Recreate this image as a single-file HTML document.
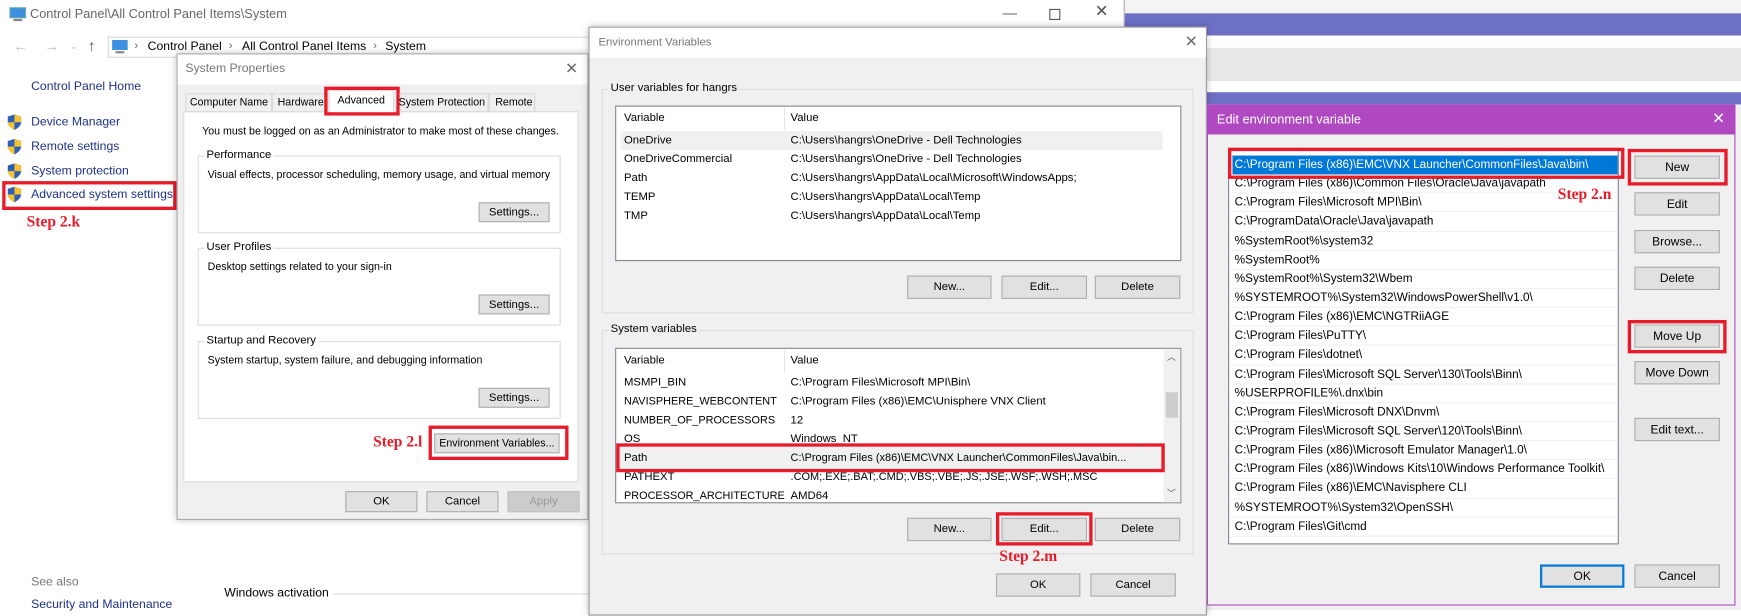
<!DOCTYPE html>
<html><head><meta charset="utf-8"><style>
*{margin:0;padding:0;box-sizing:border-box}
html,body{width:1741px;height:610px;overflow:hidden;background:#fff}
.s{position:absolute;left:0;top:0;width:1568px;height:549px;transform:scale(1.11033,1.11111);transform-origin:0 0;font-family:"Liberation Sans",sans-serif;font-size:10.2px;color:#000}
.a{position:absolute}
.t{position:absolute;line-height:14px;white-space:nowrap}
.b{position:absolute;background:#e1e1e1;border:1px solid #adadad;text-align:center;font-size:10.2px;display:flex;align-items:center;justify-content:center;white-space:nowrap}
.r{position:absolute;border:3px solid #e81b2a}
.st{position:absolute;font-family:"Liberation Serif",serif;font-weight:bold;color:#e81b2a;font-size:14px;line-height:16px;white-space:nowrap}
.g{position:absolute;border:1px solid #dcdcdc}
.gl{position:absolute;background:#f0f0f0;padding:0 2px;line-height:14px;white-space:nowrap}
.gw{background:#fff}
.el div{padding-left:4px;border-bottom:1px solid #f0f0f0;height:17.15px}
</style></head><body><div class="s">
<div class="a" style="left:1012px;top:0;width:556px;height:12px;background:#f4f4f4"></div>
<div class="a" style="left:1012px;top:12px;width:556px;height:20px;background:#6e70c6"></div>
<div class="a" style="left:1012px;top:32px;width:556px;height:11px;background:#fff"></div>
<div class="a" style="left:1012px;top:43px;width:556px;height:30px;background:#e8e8e8"></div>
<div class="a" style="left:1012px;top:83px;width:556px;height:11px;background:#6e70c6"></div>
<div class="a" style="left:1012px;top:94px;width:556px;height:455px;background:#f0f0f0"></div>

<div class="a" style="left:0;top:0;width:1013px;height:549px;background:#fff;border-right:1px solid #aaa"></div>
<svg class="a" style="left:8px;top:6px" width="16" height="14"><rect x="1" y="1" width="14" height="9" fill="#3d8fe0" stroke="#6aa" /><rect x="4" y="11" width="8" height="2" fill="#888"/></svg>
<div class="t" style="left:27px;top:6px;color:#666;font-size:11.5px">Control Panel\All Control Panel Items\System</div>
<div class="t" style="left:903px;top:5px;color:#666;font-size:13px">—</div>
<div class="a" style="left:945px;top:8px;width:10px;height:10px;border:1px solid #555"></div>
<div class="t" style="left:986px;top:4px;color:#555;font-size:15px">✕</div>
<div class="t" style="left:12px;top:35px;color:#bbb;font-size:13px">←</div>
<div class="t" style="left:40px;top:35px;color:#bbb;font-size:13px">→</div>
<div class="t" style="left:63px;top:35px;color:#bbb;font-size:8px">⌄</div>
<div class="t" style="left:79px;top:34px;color:#555;font-size:14px">↑</div>
<div class="a" style="left:97px;top:33px;width:916px;height:19px;border:1px solid #d9d9d9;border-right:none"></div>
<svg class="a" style="left:100px;top:35px" width="16" height="14"><rect x="1" y="1" width="14" height="9" fill="#3d8fe0"/><rect x="4" y="11" width="8" height="2" fill="#888"/></svg>
<div class="t" style="left:121px;top:35px;color:#666">›</div>
<div class="t" style="left:133px;top:35px;font-size:11px">Control Panel</div>
<div class="t" style="left:206px;top:35px;color:#666">›</div>
<div class="t" style="left:218px;top:35px;font-size:11px">All Control Panel Items</div>
<div class="t" style="left:336px;top:35px;color:#666">›</div>
<div class="t" style="left:347px;top:35px;font-size:11px">System</div>
<div class="t" style="left:28px;top:71px;font-size:11px;color:#1e3287">Control Panel Home</div>
<svg width="0" height="0" style="position:absolute"><defs><g id="sh"><path d="M7 0L13 2V7C13 10 10 12.5 7 14C4 12.5 1 10 1 7V2Z" fill="#2c5fb5"/><path d="M7 0V7H13V2Z" fill="#f5c330"/><path d="M7 7H1C1 10 4 12.5 7 14Z" fill="#f5c330"/></g></defs></svg>
<svg class="a" style="left:6px;top:103px" width="14" height="14"><use href="#sh"/></svg>
<svg class="a" style="left:6px;top:125px" width="14" height="14"><use href="#sh"/></svg>
<svg class="a" style="left:6px;top:147px" width="14" height="14"><use href="#sh"/></svg>
<svg class="a" style="left:6px;top:168px" width="14" height="14"><use href="#sh"/></svg>
<div class="t" style="left:28px;top:103px;font-size:11px;color:#1e3287">Device Manager</div>
<div class="t" style="left:28px;top:125px;font-size:11px;color:#1e3287">Remote settings</div>
<div class="t" style="left:28px;top:147px;font-size:11px;color:#1e3287">System protection</div>
<div class="t" style="left:28px;top:168px;font-size:11px;color:#1e3287">Advanced system settings</div>
<div class="r" style="left:2px;top:163px;width:157px;height:26px"></div>
<div class="st" style="left:24px;top:193px">Step 2.k</div>
<div class="t" style="left:28px;top:517px;font-size:11px;color:#777">See also</div>
<div class="t" style="left:28px;top:537px;font-size:11px;color:#1e3287">Security and Maintenance</div>
<div class="t" style="left:202px;top:527px;font-size:11px">Windows activation</div>
<div class="a" style="left:300px;top:534px;width:712px;height:1px;background:#ddd"></div>

<!-- System Properties -->
<div class="a" style="left:159px;top:48px;width:371px;height:420px;background:#f0f0f0;border:1px solid #aaa;box-shadow:0 0 6px rgba(0,0,0,.25)"></div>
<div class="a" style="left:160px;top:49px;width:369px;height:27px;background:#fff"></div>
<div class="t" style="left:167px;top:55px;color:#777;font-size:11px">System Properties</div>
<div class="t" style="left:509px;top:54px;color:#666;font-size:14px">✕</div>
<div class="a" style="left:165px;top:100px;width:356px;height:334px;background:#fff;border:1px solid #d9d9d9"></div>
<div class="a" style="left:167px;top:84px;width:78px;height:17px;border:1px solid #d9d9d9;background:#f0f0f0"></div>
<div class="t" style="left:171px;top:86px;font-size:9.6px">Computer Name</div>
<div class="a" style="left:245px;top:84px;width:50px;height:17px;border:1px solid #d9d9d9;background:#f0f0f0"></div>
<div class="t" style="left:250px;top:86px;font-size:9.6px">Hardware</div>
<div class="a" style="left:296px;top:81px;width:59px;height:21px;border:1px solid #d9d9d9;border-bottom:none;background:#fff"></div>
<div class="t" style="left:304px;top:84px;font-size:9.6px">Advanced</div>
<div class="r" style="left:292px;top:78px;width:68px;height:26px"></div>
<div class="a" style="left:360px;top:84px;width:80px;height:17px;border:1px solid #d9d9d9;background:#f0f0f0"></div>
<div class="t" style="left:359px;top:86px;font-size:9.6px">System Protection</div>
<div class="a" style="left:440px;top:84px;width:42px;height:17px;border:1px solid #d9d9d9;background:#f0f0f0"></div>
<div class="t" style="left:446px;top:86px;font-size:9.6px">Remote</div>
<div class="t" style="left:182px;top:112px;font-size:9.6px">You must be logged on as an Administrator to make most of these changes.</div>
<div class="g" style="left:178px;top:140px;width:327px;height:70px"></div>
<div class="gl gw" style="left:184px;top:133px">Performance</div>
<div class="t" style="left:187px;top:151px;font-size:9.6px">Visual effects, processor scheduling, memory usage, and virtual memory</div>
<div class="b" style="left:431px;top:182px;width:64px;height:18px">Settings...</div>
<div class="g" style="left:178px;top:223px;width:327px;height:70px"></div>
<div class="gl gw" style="left:184px;top:216px">User Profiles</div>
<div class="t" style="left:187px;top:234px;font-size:9.6px">Desktop settings related to your sign-in</div>
<div class="b" style="left:431px;top:265px;width:64px;height:18px">Settings...</div>
<div class="g" style="left:178px;top:307px;width:327px;height:70px"></div>
<div class="gl gw" style="left:184px;top:300px">Startup and Recovery</div>
<div class="t" style="left:187px;top:318px;font-size:9.6px">System startup, system failure, and debugging information</div>
<div class="b" style="left:431px;top:349px;width:64px;height:18px">Settings...</div>
<div class="b" style="left:391px;top:390px;width:113px;height:18px;font-size:9.6px">Environment Variables...</div>
<div class="r" style="left:386px;top:383px;width:126px;height:31px"></div>
<div class="st" style="left:336px;top:391px">Step 2.l</div>
<div class="b" style="left:311px;top:442px;width:65px;height:19px">OK</div>
<div class="b" style="left:384px;top:442px;width:65px;height:19px">Cancel</div>
<div class="b" style="left:457px;top:442px;width:65px;height:19px;color:#999;background:#ccc;border-color:#bfbfbf">Apply</div>

<!-- Environment Variables -->
<div class="a" style="left:530px;top:24px;width:557px;height:530px;background:#f0f0f0;border:1px solid #999;box-shadow:0 0 6px rgba(0,0,0,.25)"></div>
<div class="a" style="left:531px;top:25px;width:555px;height:27px;background:#fff"></div>
<div class="t" style="left:539px;top:32px;color:#777">Environment Variables</div>
<div class="t" style="left:1067px;top:30px;color:#666;font-size:14px">✕</div>
<div class="g" style="left:542px;top:80px;width:533px;height:202px"></div>
<div class="gl" style="left:548px;top:73px">User variables for hangrs</div>
<div class="a" style="left:554px;top:95px;width:510px;height:140px;background:#fff;border:1px solid #828790"></div>
<div class="a" style="left:706px;top:97px;width:1px;height:20px;background:#e5e5e5"></div>
<div class="t" style="left:562px;top:100px">Variable</div>
<div class="t" style="left:712px;top:100px">Value</div>
<div class="a" style="left:559px;top:118px;width:488px;height:17px;background:#f0f0f0"></div>
<div class="t" style="left:562px;top:120px">OneDrive</div><div class="t" style="left:712px;top:120px">C:\Users\hangrs\OneDrive - Dell Technologies</div>
<div class="t" style="left:562px;top:137px">OneDriveCommercial</div><div class="t" style="left:712px;top:137px">C:\Users\hangrs\OneDrive - Dell Technologies</div>
<div class="t" style="left:562px;top:154px">Path</div><div class="t" style="left:712px;top:154px">C:\Users\hangrs\AppData\Local\Microsoft\WindowsApps;</div>
<div class="t" style="left:562px;top:171px">TEMP</div><div class="t" style="left:712px;top:171px">C:\Users\hangrs\AppData\Local\Temp</div>
<div class="t" style="left:562px;top:188px">TMP</div><div class="t" style="left:712px;top:188px">C:\Users\hangrs\AppData\Local\Temp</div>
<div class="b" style="left:817px;top:248px;width:76px;height:21px">New...</div>
<div class="b" style="left:902px;top:248px;width:77px;height:21px">Edit...</div>
<div class="b" style="left:986px;top:248px;width:77px;height:21px">Delete</div>
<div class="g" style="left:542px;top:297px;width:533px;height:202px"></div>
<div class="gl" style="left:548px;top:290px">System variables</div>
<div class="a" style="left:554px;top:313px;width:510px;height:140px;background:#fff;border:1px solid #828790;overflow:hidden"></div>
<div class="a" style="left:706px;top:315px;width:1px;height:20px;background:#e5e5e5"></div>
<div class="a" style="left:1048px;top:314px;width:15px;height:138px;background:#f0f0f0"></div>
<div class="a" style="left:1050px;top:353px;width:11px;height:23px;background:#cdcdcd"></div>
<div class="t" style="left:1051px;top:315px;font-size:8px;color:#555">︿</div>
<div class="t" style="left:1051px;top:438px;font-size:8px;color:#555">﹀</div>
<div class="t" style="left:562px;top:318px">Variable</div>
<div class="t" style="left:712px;top:318px">Value</div>
<div class="t" style="left:562px;top:338px">MSMPI_BIN</div><div class="t" style="left:712px;top:338px">C:\Program Files\Microsoft MPI\Bin\</div>
<div class="t" style="left:562px;top:355px;font-size:9.8px">NAVISPHERE_WEBCONTENT</div><div class="t" style="left:712px;top:355px">C:\Program Files (x86)\EMC\Unisphere VNX Client</div>
<div class="t" style="left:562px;top:372px;font-size:9.8px">NUMBER_OF_PROCESSORS</div><div class="t" style="left:712px;top:372px">12</div>
<div class="t" style="left:562px;top:389px">OS</div><div class="t" style="left:712px;top:389px">Windows_NT</div>
<div class="a" style="left:557px;top:402px;width:490px;height:20px;background:#f0f0f0"></div>
<div class="t" style="left:562px;top:406px">Path</div><div class="t" style="left:712px;top:406px;font-size:9.9px">C:\Program Files (x86)\EMC\VNX Launcher\CommonFiles\Java\bin...</div>
<div class="t" style="left:562px;top:423px">PATHEXT</div><div class="t" style="left:712px;top:423px;font-size:9.9px">.COM;.EXE;.BAT;.CMD;.VBS;.VBE;.JS;.JSE;.WSF;.WSH;.MSC</div>
<div class="a" style="left:555px;top:436px;width:493px;height:16px;overflow:hidden"><div class="t" style="left:7px;top:4px;font-size:9.8px">PROCESSOR_ARCHITECTURE</div><div class="t" style="left:157px;top:4px">AMD64</div></div>
<div class="r" style="left:555px;top:399px;width:494px;height:26px"></div>
<div class="b" style="left:817px;top:466px;width:76px;height:21px">New...</div>
<div class="b" style="left:902px;top:466px;width:77px;height:21px">Edit...</div>
<div class="b" style="left:986px;top:466px;width:77px;height:21px">Delete</div>
<div class="r" style="left:897px;top:461px;width:87px;height:30px"></div>
<div class="st" style="left:900px;top:494px">Step 2.m</div>
<div class="b" style="left:897px;top:516px;width:76px;height:21px">OK</div>
<div class="b" style="left:982px;top:516px;width:77px;height:21px">Cancel</div>

<!-- Edit environment variable -->
<div class="a" style="left:1087px;top:94px;width:476px;height:451px;background:#f0f0f0;border:1px solid #b049c1"></div>
<div class="a" style="left:1087px;top:94px;width:476px;height:27px;background:#b049c1"></div>
<div class="t" style="left:1096px;top:101px;color:#fff;font-size:11.5px">Edit environment variable</div>
<div class="t" style="left:1542px;top:99px;color:#fff;font-size:14px">✕</div>
<div class="a" style="left:1106px;top:133px;width:352px;height:357px;background:#fff;border:1px solid #828790"></div>
<div class="a" style="left:1110px;top:140px;width:347px;height:17px;background:#0078d7"></div>
<div class="a el" style="left:1108px;top:140px;width:349px;font-size:10.6px;line-height:17px;white-space:nowrap">
<div style="color:#fff;border-bottom:none">C:\Program Files (x86)\EMC\VNX Launcher\CommonFiles\Java\bin\</div>
<div>C:\Program Files (x86)\Common Files\Oracle\Java\javapath</div>
<div>C:\Program Files\Microsoft MPI\Bin\</div>
<div>C:\ProgramData\Oracle\Java\javapath</div>
<div>%SystemRoot%\system32</div>
<div>%SystemRoot%</div>
<div>%SystemRoot%\System32\Wbem</div>
<div>%SYSTEMROOT%\System32\WindowsPowerShell\v1.0\</div>
<div>C:\Program Files (x86)\EMC\NGTRiiAGE</div>
<div>C:\Program Files\PuTTY\</div>
<div>C:\Program Files\dotnet\</div>
<div>C:\Program Files\Microsoft SQL Server\130\Tools\Binn\</div>
<div>%USERPROFILE%\.dnx\bin</div>
<div>C:\Program Files\Microsoft DNX\Dnvm\</div>
<div>C:\Program Files\Microsoft SQL Server\120\Tools\Binn\</div>
<div>C:\Program Files (x86)\Microsoft Emulator Manager\1.0\</div>
<div>C:\Program Files (x86)\Windows Kits\10\Windows Performance Toolkit\</div>
<div>C:\Program Files (x86)\EMC\Navisphere CLI</div>
<div>%SYSTEMROOT%\System32\OpenSSH\</div>
<div>C:\Program Files\Git\cmd</div>
</div>
<div class="r" style="left:1106px;top:133px;width:357px;height:28px"></div>
<div class="st" style="left:1403px;top:168px">Step 2.n</div>
<div class="b" style="left:1472px;top:140px;width:77px;height:21px;font-size:10.8px">New</div>
<div class="r" style="left:1466px;top:134px;width:90px;height:33px"></div>
<div class="b" style="left:1472px;top:173px;width:77px;height:21px;font-size:10.8px">Edit</div>
<div class="b" style="left:1472px;top:207px;width:77px;height:21px;font-size:10.8px">Browse...</div>
<div class="b" style="left:1472px;top:240px;width:77px;height:21px;font-size:10.8px">Delete</div>
<div class="b" style="left:1472px;top:292px;width:77px;height:21px;font-size:10.8px">Move Up</div>
<div class="r" style="left:1466px;top:288px;width:89px;height:30px"></div>
<div class="b" style="left:1472px;top:325px;width:77px;height:21px;font-size:10.8px">Move Down</div>
<div class="b" style="left:1472px;top:376px;width:77px;height:21px;font-size:10.8px">Edit text...</div>
<div class="b" style="left:1387px;top:508px;width:76px;height:21px;border:2px solid #0078d7;font-size:10.8px">OK</div>
<div class="b" style="left:1472px;top:508px;width:77px;height:21px;font-size:10.8px">Cancel</div>
</div></body></html>
